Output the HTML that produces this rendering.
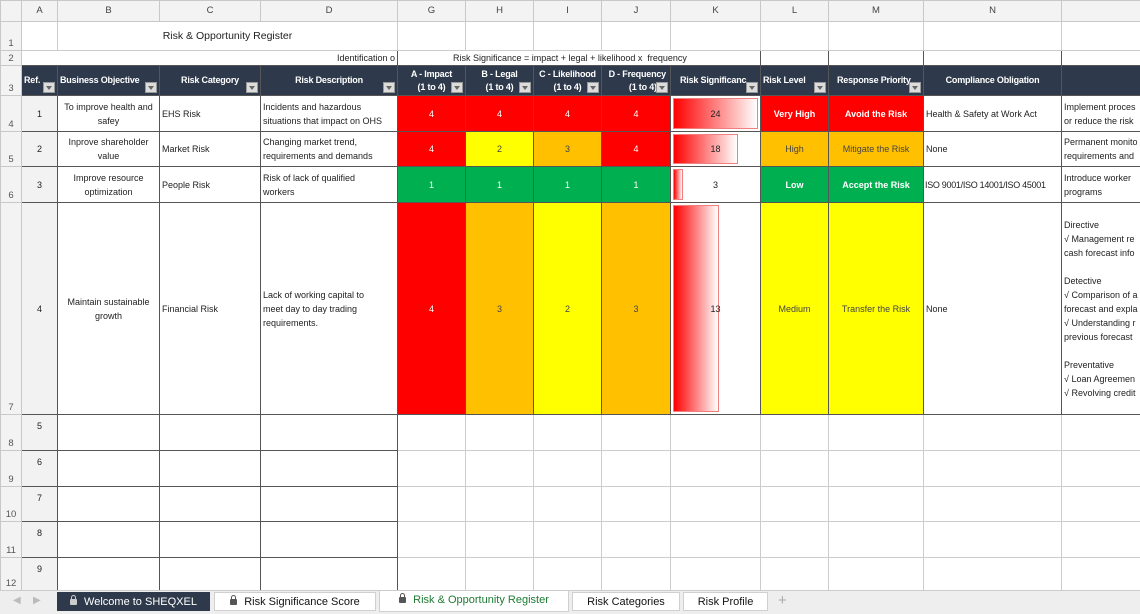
<!DOCTYPE html>
<html><head><meta charset="utf-8"><style>
*{box-sizing:border-box;margin:0;padding:0}
body{width:1140px;height:614px;overflow:hidden;background:#fff;font-family:"Liberation Sans",sans-serif;font-size:9px;color:#222;position:relative}
table{border-collapse:collapse;table-layout:fixed;position:absolute;left:0;top:0;width:1140px}
td{border:1px solid #555;overflow:hidden;white-space:nowrap;text-align:center;vertical-align:middle;line-height:14px;padding:0 2px}
tr.ch td{background:#f3f3f3;border-color:#c8c8c8;color:#444;font-size:9.5px}
td.rh{background:#f3f3f3;border-color:#c8c8c8;color:#555;vertical-align:bottom;text-align:center;font-size:9.5px;line-height:12px;padding:0}
td.nb{border-color:#ccc}
td.a{background:#f2f2f2}
tr.h td{background:#2e3a4b;color:#fff;font-weight:bold;font-size:9px;position:relative;line-height:13px;letter-spacing:-0.2px}
tr.h td.rh{background:#f3f3f3;color:#555;font-weight:normal}
.f{position:absolute;right:2px;bottom:2px;width:12px;height:11px;background:#dcdcdc;border:1px solid #999}
.f:after{content:"";position:absolute;left:2px;top:3px;border-left:3px solid transparent;border-right:3px solid transparent;border-top:4px solid #666}
.l{text-align:left;white-space:nowrap}
.R{background:#ff0000;color:#fff}
.Y{background:#ffff00;color:#444}
.O{background:#ffc000;color:#444}
.G{background:#00b050;color:#fff}
.b{font-weight:bold}
.bar{position:relative}
.bar i{position:absolute;left:2px;top:2px;bottom:2px;background:linear-gradient(90deg,#ff0000,#fff);border:1px solid #f08080}
.bar span{position:relative}
.tabs{position:absolute;left:0;top:590px;width:1140px;height:24px;background:#eee;border-top:1px solid #ccc;font-size:11px}
.tab{position:absolute;top:1px;height:19px;line-height:19px;background:#fff;color:#111;text-align:center;border:1px solid #d0d0d0}
.lk{display:inline-block;width:7px;height:6px;background:currentColor;position:relative;margin-right:7px;border-radius:1px}
.lk:before{content:"";position:absolute;left:1px;top:-4px;width:3px;height:4px;border:1px solid currentColor;border-bottom:none;border-radius:3px 3px 0 0}
</style></head><body>
<table>
<colgroup><col style="width:21px"><col style="width:36px"><col style="width:102px"><col style="width:101px"><col style="width:137px"><col style="width:68px"><col style="width:68px"><col style="width:68px"><col style="width:69px"><col style="width:90px"><col style="width:68px"><col style="width:95px"><col style="width:138px"><col style="width:79px"></colgroup>
<tr class="ch" style="height:21px"><td></td><td>A</td><td>B</td><td>C</td><td>D</td><td>G</td><td>H</td><td>I</td><td>J</td><td>K</td><td>L</td><td>M</td><td>N</td><td></td></tr>
<tr style="height:29px"><td class="rh">1</td><td class="nb"></td><td colspan="3" class="nb" style="font-size:10.5px">Risk &amp; Opportunity Register</td><td class="nb"></td><td class="nb"></td><td class="nb"></td><td class="nb"></td><td class="nb"></td><td class="nb"></td><td class="nb"></td><td class="nb"></td><td class="nb"></td></tr>
<tr style="height:15px"><td class="rh">2</td><td colspan="4" style="text-align:right;line-height:13px">Identification o</td><td colspan="5" style="text-align:left;padding-left:55px;line-height:13px">Risk Significance = impact + legal + likelihood x&nbsp; frequency</td><td></td><td></td><td></td><td></td></tr>
<tr class="h" style="height:30px"><td class="rh">3</td><td style="text-align:left">Ref.<span class="f"></span></td><td style="text-align:left">Business Objective<span class="f"></span></td><td>Risk Category<span class="f"></span></td><td>Risk Description<span class="f"></span></td><td>A - Impact<br>(1 to 4)<span class="f"></span></td><td>B - Legal<br>(1 to 4)<span class="f"></span></td><td>C - Likelihood<br>(1 to 4)<span class="f"></span></td><td style="text-align:right;padding-right:4px">D - Frequency<br>(1 to 4)&nbsp;&nbsp;&nbsp;&nbsp;<span class="f"></span></td><td style="text-align:left;padding-left:9px">Risk Significanc<span class="f"></span></td><td style="text-align:left">Risk Level<span class="f"></span></td><td style="text-align:left;padding-left:8px">Response Priority<span class="f"></span></td><td>Compliance Obligation<span class="f" style="right:-69px"></span></td><td></td></tr>
<tr style="height:36px"><td class="rh">4</td><td class="a">1</td><td>To improve health and<br>safey</td><td class="l">EHS Risk</td><td class="l">Incidents and hazardous<br>situations that impact on OHS</td><td class="R">4</td><td class="R">4</td><td class="R">4</td><td class="R">4</td><td class="bar"><i style="right:2px"></i><span>24</span></td><td class="R b">Very High</td><td class="R b">Avoid the Risk</td><td class="l">Health &amp; Safety at Work Act</td><td class="l">Implement proces<br>or reduce the risk</td></tr>
<tr style="height:35px"><td class="rh">5</td><td class="a">2</td><td>Inprove shareholder<br>value</td><td class="l">Market Risk</td><td class="l">Changing market trend,<br>requirements and demands</td><td class="R">4</td><td class="Y">2</td><td class="O">3</td><td class="R">4</td><td class="bar"><i style="width:65px"></i><span>18</span></td><td class="O">High</td><td class="O">Mitigate the Risk</td><td class="l">None</td><td class="l">Permanent monito<br>requirements and</td></tr>
<tr style="height:36px"><td class="rh">6</td><td class="a">3</td><td>Improve resource<br>optimization</td><td class="l">People Risk</td><td class="l">Risk of lack of qualified<br>workers</td><td class="G">1</td><td class="G">1</td><td class="G">1</td><td class="G">1</td><td class="bar"><i style="width:10px"></i><span>3</span></td><td class="G b">Low</td><td class="G b">Accept the Risk</td><td class="l" style="padding:0 1px;letter-spacing:-0.3px">ISO 9001/ISO 14001/ISO 45001</td><td class="l">Introduce worker<br>programs</td></tr>
<tr style="height:212px"><td class="rh">7</td><td class="a">4</td><td>Maintain sustainable<br>growth</td><td class="l">Financial Risk</td><td class="l">Lack of working capital to<br>meet day to day trading<br>requirements.</td><td class="R">4</td><td class="O">3</td><td class="Y">2</td><td class="O">3</td><td class="bar"><i style="width:46px"></i><span>13</span></td><td class="Y">Medium</td><td class="Y">Transfer the Risk</td><td class="l">None</td><td class="l">Directive<br>√ Management re<br>cash forecast info<br><br>Detective<br>√ Comparison of a<br>forecast and expla<br>√ Understanding r<br>previous forecast<br><br>Preventative<br>√ Loan Agreemen<br>√ Revolving credit</td></tr>
<tr style="height:36px"><td class="rh">8</td><td class="a" style="vertical-align:top;padding-top:4px">5</td><td></td><td></td><td></td><td class="nb"></td><td class="nb"></td><td class="nb"></td><td class="nb"></td><td class="nb"></td><td class="nb"></td><td class="nb"></td><td class="nb"></td><td class="nb"></td></tr>
<tr style="height:36px"><td class="rh">9</td><td class="a" style="vertical-align:top;padding-top:4px">6</td><td></td><td></td><td></td><td class="nb"></td><td class="nb"></td><td class="nb"></td><td class="nb"></td><td class="nb"></td><td class="nb"></td><td class="nb"></td><td class="nb"></td><td class="nb"></td></tr>
<tr style="height:35px"><td class="rh">10</td><td class="a" style="vertical-align:top;padding-top:4px">7</td><td></td><td></td><td></td><td class="nb"></td><td class="nb"></td><td class="nb"></td><td class="nb"></td><td class="nb"></td><td class="nb"></td><td class="nb"></td><td class="nb"></td><td class="nb"></td></tr>
<tr style="height:36px"><td class="rh">11</td><td class="a" style="vertical-align:top;padding-top:4px">8</td><td></td><td></td><td></td><td class="nb"></td><td class="nb"></td><td class="nb"></td><td class="nb"></td><td class="nb"></td><td class="nb"></td><td class="nb"></td><td class="nb"></td><td class="nb"></td></tr>
<tr style="height:33px"><td class="rh">12</td><td class="a" style="vertical-align:top;padding-top:4px">9</td><td></td><td></td><td></td><td class="nb"></td><td class="nb"></td><td class="nb"></td><td class="nb"></td><td class="nb"></td><td class="nb"></td><td class="nb"></td><td class="nb"></td><td class="nb"></td></tr>
</table>
<div class="tabs">
<span style="position:absolute;left:13px;top:4px;color:#bbb;font-size:10px">◀</span><span style="position:absolute;left:33px;top:4px;color:#bbb;font-size:10px">▶</span>
<div class="tab" style="left:57px;width:153px;background:#2e3a4b;color:#fff;border-color:#2e3a4b"><span class="lk" style="color:#ccc"></span>Welcome to SHEQXEL</div>
<div class="tab" style="left:214px;width:162px"><span class="lk" style="color:#555"></span>Risk Significance Score</div>
<div class="tab" style="left:379px;width:190px;color:#1e7b34;top:0;height:21px;border-top:none"><span class="lk" style="color:#555"></span>Risk &amp; Opportunity Register</div>
<div class="tab" style="left:572px;width:108px">Risk Categories</div>
<div class="tab" style="left:683px;width:85px">Risk Profile</div>
<span style="position:absolute;left:778px;top:1px;color:#aaa;font-size:15px">+</span>
</div>
</body></html>
